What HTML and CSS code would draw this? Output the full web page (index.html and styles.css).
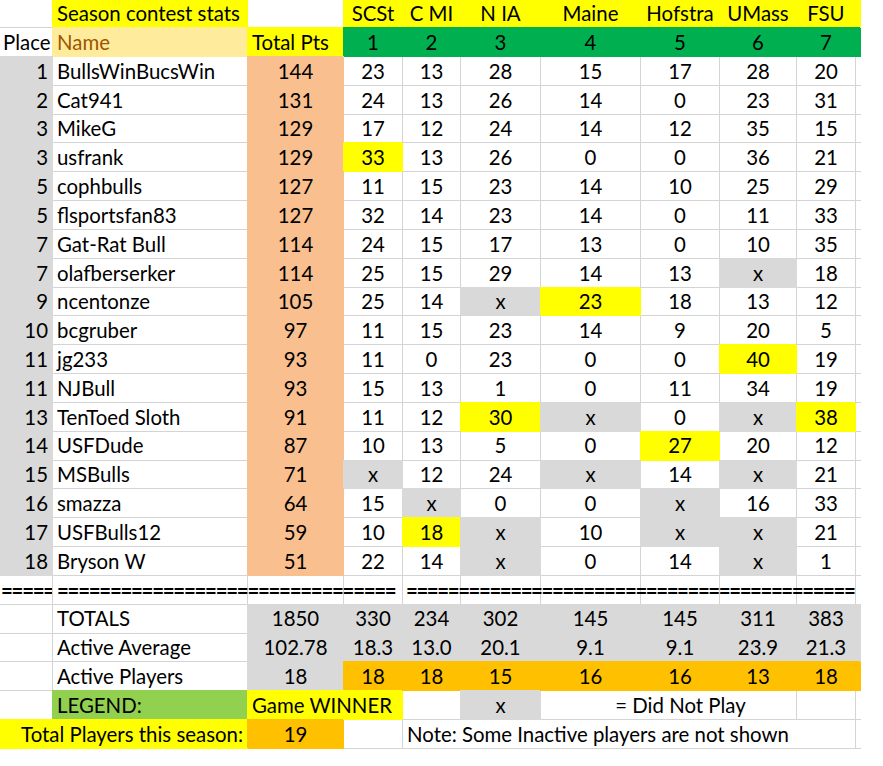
FILE: index.html
```html
<!DOCTYPE html>
<html>
<head>
<meta charset="utf-8">
<title>Season contest stats</title>
<link rel="stylesheet" href="styles.css">
</head>
<body>
<div class="sheet">
  <!-- row 1 -->
  <div class="c"></div>
  <div class="c l yel">Season contest stats</div>
  <div class="c"></div>
  <div class="c yel">SCSt</div>
  <div class="c yel">C MI</div>
  <div class="c yel">N IA</div>
  <div class="c yel">Maine</div>
  <div class="c yel">Hofstra</div>
  <div class="c yel">UMass</div>
  <div class="c yel">FSU</div>
  <div class="c yel edge"></div>
  <!-- row 2 -->
  <div class="c l place-h">Place</div>
  <div class="c l neutral">Name</div>
  <div class="c l yel">Total Pts</div>
  <div class="c grn">1</div>
  <div class="c grn">2</div>
  <div class="c grn">3</div>
  <div class="c grn">4</div>
  <div class="c grn">5</div>
  <div class="c grn">6</div>
  <div class="c grn">7</div>
  <div class="c grn edge"></div>
  <!-- data -->
  <div class="c r gry">1</div><div class="c l">BullsWinBucsWin</div><div class="c org">144</div><div class="c">23</div><div class="c">13</div><div class="c">28</div><div class="c">15</div><div class="c">17</div><div class="c">28</div><div class="c">20</div><div class="c edge"></div>
  <div class="c r gry">2</div><div class="c l">Cat941</div><div class="c org">131</div><div class="c">24</div><div class="c">13</div><div class="c">26</div><div class="c">14</div><div class="c">0</div><div class="c">23</div><div class="c">31</div><div class="c edge"></div>
  <div class="c r gry">3</div><div class="c l">MikeG</div><div class="c org">129</div><div class="c">17</div><div class="c">12</div><div class="c">24</div><div class="c">14</div><div class="c">12</div><div class="c">35</div><div class="c">15</div><div class="c edge"></div>
  <div class="c r gry">3</div><div class="c l">usfrank</div><div class="c org">129</div><div class="c yel">33</div><div class="c">13</div><div class="c">26</div><div class="c">0</div><div class="c">0</div><div class="c">36</div><div class="c">21</div><div class="c edge"></div>
  <div class="c r gry">5</div><div class="c l">cophbulls</div><div class="c org">127</div><div class="c">11</div><div class="c">15</div><div class="c">23</div><div class="c">14</div><div class="c">10</div><div class="c">25</div><div class="c">29</div><div class="c edge"></div>
  <div class="c r gry">5</div><div class="c l">flsportsfan83</div><div class="c org">127</div><div class="c">32</div><div class="c">14</div><div class="c">23</div><div class="c">14</div><div class="c">0</div><div class="c">11</div><div class="c">33</div><div class="c edge"></div>
  <div class="c r gry">7</div><div class="c l">Gat-Rat Bull</div><div class="c org">114</div><div class="c">24</div><div class="c">15</div><div class="c">17</div><div class="c">13</div><div class="c">0</div><div class="c">10</div><div class="c">35</div><div class="c edge"></div>
  <div class="c r gry">7</div><div class="c l">olafberserker</div><div class="c org">114</div><div class="c">25</div><div class="c">15</div><div class="c">29</div><div class="c">14</div><div class="c">13</div><div class="c gry">x</div><div class="c">18</div><div class="c edge"></div>
  <div class="c r gry">9</div><div class="c l">ncentonze</div><div class="c org">105</div><div class="c">25</div><div class="c">14</div><div class="c gry">x</div><div class="c yel">23</div><div class="c">18</div><div class="c">13</div><div class="c">12</div><div class="c edge"></div>
  <div class="c r gry">10</div><div class="c l">bcgruber</div><div class="c org">97</div><div class="c">11</div><div class="c">15</div><div class="c">23</div><div class="c">14</div><div class="c">9</div><div class="c">20</div><div class="c">5</div><div class="c edge"></div>
  <div class="c r gry">11</div><div class="c l">jg233</div><div class="c org">93</div><div class="c">11</div><div class="c">0</div><div class="c">23</div><div class="c">0</div><div class="c">0</div><div class="c yel">40</div><div class="c">19</div><div class="c edge"></div>
  <div class="c r gry">11</div><div class="c l">NJBull</div><div class="c org">93</div><div class="c">15</div><div class="c">13</div><div class="c">1</div><div class="c">0</div><div class="c">11</div><div class="c">34</div><div class="c">19</div><div class="c edge"></div>
  <div class="c r gry">13</div><div class="c l">TenToed Sloth</div><div class="c org">91</div><div class="c">11</div><div class="c">12</div><div class="c yel">30</div><div class="c gry">x</div><div class="c">0</div><div class="c gry">x</div><div class="c yel">38</div><div class="c edge"></div>
  <div class="c r gry">14</div><div class="c l">USFDude</div><div class="c org">87</div><div class="c">10</div><div class="c">13</div><div class="c">5</div><div class="c">0</div><div class="c yel">27</div><div class="c">20</div><div class="c">12</div><div class="c edge"></div>
  <div class="c r gry">15</div><div class="c l">MSBulls</div><div class="c org">71</div><div class="c gry">x</div><div class="c">12</div><div class="c">24</div><div class="c gry">x</div><div class="c">14</div><div class="c gry">x</div><div class="c">21</div><div class="c edge"></div>
  <div class="c r gry">16</div><div class="c l">smazza</div><div class="c org">64</div><div class="c">15</div><div class="c gry">x</div><div class="c">0</div><div class="c">0</div><div class="c gry">x</div><div class="c">16</div><div class="c">33</div><div class="c edge"></div>
  <div class="c r gry">17</div><div class="c l">USFBulls12</div><div class="c org">59</div><div class="c">10</div><div class="c yel">18</div><div class="c gry">x</div><div class="c">10</div><div class="c gry">x</div><div class="c gry">x</div><div class="c">21</div><div class="c edge"></div>
  <div class="c r gry">18</div><div class="c l">Bryson W</div><div class="c org">51</div><div class="c">22</div><div class="c">14</div><div class="c gry">x</div><div class="c">0</div><div class="c">14</div><div class="c gry">x</div><div class="c">1</div><div class="c edge"></div>
  <!-- separator -->
  <div class="c l sep sep-place">=====</div>
  <div class="c l sep sep-mid span3">================================</div>
  <div class="c l sep sep-rest span7">===========================================</div>
  <!-- totals -->
  <div class="c"></div><div class="c l">TOTALS</div><div class="c gry">1850</div><div class="c gry">330</div><div class="c gry">234</div><div class="c gry">302</div><div class="c gry">145</div><div class="c gry">145</div><div class="c gry">311</div><div class="c gry">383</div><div class="c gry edge"></div>
  <div class="c"></div><div class="c l">Active Average</div><div class="c gry">102.78</div><div class="c gry">18.3</div><div class="c gry">13.0</div><div class="c gry">20.1</div><div class="c gry">9.1</div><div class="c gry">9.1</div><div class="c gry">23.9</div><div class="c gry">21.3</div><div class="c gry edge"></div>
  <div class="c"></div><div class="c l">Active Players</div><div class="c gry">18</div><div class="c amb">18</div><div class="c amb">18</div><div class="c amb">15</div><div class="c amb">16</div><div class="c amb">16</div><div class="c amb">13</div><div class="c amb">18</div><div class="c amb edge"></div>
  <!-- legend -->
  <div class="c"></div>
  <div class="c l lgrn">LEGEND:</div>
  <div class="c l yel span2">Game WINNER</div>
  <div class="c"></div>
  <div class="c gry">x</div>
  <div class="c span3 dnp">= Did Not Play</div>
  <div class="c"></div>
  <div class="c edge"></div>
  <!-- bottom -->
  <div class="c r yel span2">Total Players this season:</div>
  <div class="c amb">19</div>
  <div class="c"></div>
  <div class="c l span6">Note: Some Inactive players are not shown</div>
  <div class="c edge"></div>
</div>
</body>
</html>
```
FILE: styles.css
```css
html, body {
  margin: 0;
  padding: 0;
  background: #ffffff;
}

body {
  font-family: Lato, "Open Sans", sans-serif;
  font-size: 20.4px;
  color: #000000;
}

.sheet {
  display: grid;
  width: 861px;
  grid-template-columns: 53px 195px 96px 59px 58px 80px 100px 79px 77px 59px 5px;
  grid-template-rows: 28px 29px repeat(24, 28.83px);
}

.c {
  box-sizing: border-box;
  display: flex;
  align-items: center;
  justify-content: center;
  padding: 0 4px;
  border-right: 1px solid #d4d4d4;
  border-bottom: 1px solid #d4d4d4;
  white-space: nowrap;
  line-height: 1;
  min-width: 0;
}

.l { justify-content: flex-start; }
.r { justify-content: flex-end; padding-right: 4px; }

.edge { border-right: none; padding: 0; }

.place-h { padding-left: 3px; }

.yel, .grn, .gry, .org, .amb, .lgrn, .neutral {
  border-color: transparent;
}

.yel { background: #ffff00; box-shadow: -1px -1px 0 0 #ffff00; }
.grn { background: #00b050; box-shadow: -1px -1px 0 0 #00b050; }
.gry { background: #d9d9d9; box-shadow: -1px -1px 0 0 #d9d9d9; }
.org { background: #fabf8f; box-shadow: -1px -1px 0 0 #fabf8f; }
.amb { background: #ffc000; box-shadow: -1px -1px 0 0 #ffc000; }
.lgrn { background: #92d050; box-shadow: -1px -1px 0 0 #92d050; }
.neutral { background: #ffeb9c; color: #9c5700; box-shadow: -1px -1px 0 0 #ffeb9c; }

.span2 { grid-column: span 2; }
.span3 { grid-column: span 3; }
.span6 { grid-column: span 6; }
.span7 { grid-column: span 7; }

.dnp { padding-left: 28px; }

/* separator row: a run of "=" across the cells, gridlines kept */
.sep {
  font-weight: 700;
  letter-spacing: -1.25px;
  overflow: hidden;
}

.sep-place { padding: 0 0 0 1px; }

.sep-mid {
  padding-left: 4px;
  background-image:
    linear-gradient(#d4d4d4, #d4d4d4),
    linear-gradient(#d4d4d4, #d4d4d4);
  background-size: 1px 100%, 1px 100%;
  background-position: 194px 0, 290px 0;
  background-repeat: no-repeat;
}

.sep-rest {
  padding-left: 3px;
  border-right: none;
  letter-spacing: -1.4px;
  background-image:
    linear-gradient(#d4d4d4, #d4d4d4),
    linear-gradient(#d4d4d4, #d4d4d4),
    linear-gradient(#d4d4d4, #d4d4d4),
    linear-gradient(#d4d4d4, #d4d4d4),
    linear-gradient(#d4d4d4, #d4d4d4),
    linear-gradient(#d4d4d4, #d4d4d4);
  background-size: 1px 100%, 1px 100%, 1px 100%, 1px 100%, 1px 100%, 1px 100%;
  background-position: 57px 0, 137px 0, 237px 0, 316px 0, 393px 0, 452px 0;
  background-repeat: no-repeat;
}
```
